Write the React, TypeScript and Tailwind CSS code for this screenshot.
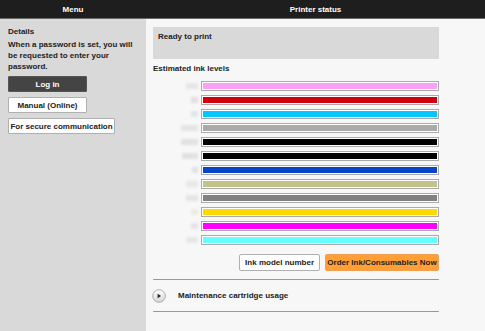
const inks = [
  { color: '#f9a0f9', label: 12, tint: '#e6e6e6' },
  { color: '#d0000f', label: 7, tint: '#eadede' },
  { color: '#00c8ff', label: 7, tint: '#e1e7ea' },
  { color: '#aaaaaa', label: 17, tint: '#e4e4e4' },
  { color: '#000000', label: 17, tint: '#e2e2e2' },
  { color: '#000000', label: 16, tint: '#e2e2e2' },
  { color: '#0a45c8', label: 6, tint: '#e0e2ea' },
  { color: '#c2c28c', label: 12, tint: '#e8e8e6' },
  { color: '#808080', label: 12, tint: '#e4e4e4' },
  { color: '#ffd800', label: 7, tint: '#eeece2' },
  { color: '#ff00ff', label: 7, tint: '#eae2ea' },
  { color: '#66ffff', label: 12, tint: '#e4e8e8' },
];

export default function App() {
  return (
    <div
      className="w-[485px] h-[331px] overflow-hidden flex flex-col bg-[#f7f7f7] text-[8px] font-bold leading-[11px] text-[#222]"
      style={{ fontFamily: '"Liberation Sans", Arial, sans-serif' }}
    >
      {/* Top bar */}
      <header className="h-[19px] shrink-0 flex bg-[#1e1e1e] border-b border-[#6a6a6a] text-white">
        <div className="w-[146px] flex items-center justify-center">Menu</div>
        <div className="flex-1 flex items-center justify-center">Printer status</div>
      </header>

      <div className="flex flex-1">
        {/* Sidebar */}
        <aside className="w-[146px] shrink-0 bg-[#d9d9d9] px-[8px] pt-[7px] flex flex-col">
          <div>Details</div>
          <p className="mt-[2px]">
            When a password is set, you will
            <br />
            be requested to enter your
            <br />
            password.
          </p>
          <button className="mt-[4px] w-[79px] h-[16px] bg-[#444] text-white border border-[#555] rounded-[1px] flex items-center justify-center">
            Log in
          </button>
          <button className="mt-[5px] w-[79px] h-[16px] bg-white border border-[#b0b0b0] rounded-[1px] flex items-center justify-center">
            Manual (Online)
          </button>
          <button className="mt-[5px] w-[107px] h-[16px] bg-white border border-[#b0b0b0] rounded-[1px] flex items-center justify-center whitespace-nowrap">
            For secure communication
          </button>
        </aside>

        {/* Main panel */}
        <main className="flex-1 pl-[7px] pt-[8px] pr-[46px] flex flex-col">
          <div className="h-[32px] bg-[#d9d9d9] px-[5px] pt-[4px]">Ready to print</div>
          <div className="mt-[4px]">Estimated ink levels</div>

          <div className="mt-[7px] flex flex-col gap-[4px]">
            {inks.map((ink, i) => (
              <div key={i} className="flex items-center h-[10px]">
                <div className="w-[46px] flex justify-end pr-[1px]">
                  <div
                    className="h-[6px] blur-[0.8px]"
                    style={{ width: ink.label, backgroundColor: ink.tint }}
                  />
                </div>
                <div className="ml-[2px] flex-1 h-[10px] border border-[#aaa] bg-white p-[1px]">
                  <div className="h-full" style={{ backgroundColor: ink.color }} />
                </div>
              </div>
            ))}
          </div>

          <div className="mt-[9px] flex justify-end gap-[5px]">
            <button className="h-[17px] px-[5px] bg-white border border-[#b0b0b0] rounded-[2px] flex items-center">
              Ink model number
            </button>
            <button className="h-[17px] w-[114px] bg-[#ff9f35] border border-[#f0a050] rounded-[2px] flex items-center justify-center whitespace-nowrap">
              Order Ink/Consumables Now
            </button>
          </div>

          <div className="mt-[8px] border-t border-[#999] border-b h-[33px] flex items-center">
            <svg width="14" height="14" viewBox="0 0 14 14" className="ml-[-1px]">
              <defs>
                <linearGradient id="g" x1="0" y1="0" x2="0" y2="1">
                  <stop offset="0" stopColor="#ffffff" />
                  <stop offset="1" stopColor="#d6d6d6" />
                </linearGradient>
              </defs>
              <circle cx="7" cy="7" r="6.3" fill="url(#g)" stroke="#9a9a9a" strokeWidth="0.8" />
              <path d="M5.6 4.8 L9 7 L5.6 9.2 Z" fill="#222" />
            </svg>
            <span className="ml-[12px]">Maintenance cartridge usage</span>
          </div>
        </main>
      </div>
    </div>
  );
}
